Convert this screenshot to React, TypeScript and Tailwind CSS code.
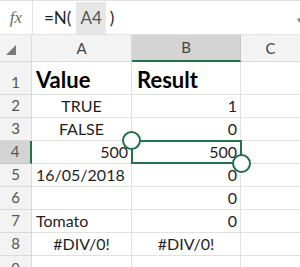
import { ReactNode } from 'react';

type Align = 'left' | 'center' | 'right';

interface Cell {
  text: string;
  align: Align;
}

const rows: { a: Cell; b: Cell }[] = [
  { a: { text: 'TRUE', align: 'center' }, b: { text: '1', align: 'right' } },
  { a: { text: 'FALSE', align: 'center' }, b: { text: '0', align: 'right' } },
  { a: { text: '500', align: 'right' }, b: { text: '500', align: 'right' } },
  { a: { text: '16/05/2018', align: 'left' }, b: { text: '0', align: 'right' } },
  { a: { text: '', align: 'left' }, b: { text: '0', align: 'right' } },
  { a: { text: 'Tomato', align: 'left' }, b: { text: '0', align: 'right' } },
  { a: { text: '#DIV/0!', align: 'center' }, b: { text: '#DIV/0!', align: 'center' } },
];

const alignClass: Record<Align, string> = {
  left: 'justify-start pl-[4px]',
  center: 'justify-center',
  right: 'justify-end pr-[3px]',
};

const DataCell = ({ cell, children }: { cell: Cell; children?: ReactNode }) => (
  <div
    className={`relative flex items-end pb-[1px] h-[23px] border-r border-b border-[#e1e1e1] text-[16px] leading-[20px] text-[#1f1f1f] ${alignClass[cell.align]}`}
  >
    {cell.text}
    {children}
  </div>
);

const Handle = ({ className }: { className: string }) => (
  <div
    className={`absolute w-[19px] h-[19px] rounded-full bg-white border-2 border-[#217346] z-20 ${className}`}
  />
);

export default function App() {
  return (
    <div
      className="w-[300px] h-[267px] overflow-hidden bg-white"
      style={{ fontFamily: 'Lato, "Liberation Sans", sans-serif' }}
    >
      {/* formula bar */}
      <div className="flex h-[35px] border-t border-b border-[#e1e1e1]">
        <div className="w-[33px] flex items-center justify-center border-r border-[#e1e1e1] text-[#6b6b6b] text-[17px] italic" style={{ fontFamily: '"Liberation Serif", serif' }}>
          fx
        </div>
        <div className="flex-1 flex items-center pl-[11px] text-[17px] text-[#1f1f1f] relative">
          <span>=N(</span>
          <span className="ml-[5px] px-[4px] h-[32px] flex items-center bg-[#e6e6e6] text-[#555]">A4</span>
          <span className="ml-[4px]">)</span>
          <span className="absolute right-[-2px] top-[12px] text-[9px] text-[#888]">▾</span>
        </div>
      </div>

      {/* column headers */}
      <div className="grid grid-cols-[32px_100px_109px_1fr] h-[27px] text-[15px] text-[#444]">
        <div className="relative bg-[#f3f3f3] border-r border-b border-[#d9d9d9]">
          <svg className="absolute left-[6px] bottom-[6px]" width="10" height="10" viewBox="0 0 10 10">
            <polygon points="10,0 10,10 0,10" fill="#7a7a7a" />
          </svg>
        </div>
        <div className="flex items-center justify-center bg-[#f3f3f3] border-r border-b border-[#d9d9d9]">A</div>
        <div className="flex items-center justify-center bg-[#d4d4d4] border-r border-[#c6c6c6] border-b-2 border-b-[#217346]">B</div>
        <div className="flex items-center justify-center bg-[#f3f3f3] border-b border-[#d9d9d9]">C</div>
      </div>

      {/* row 1 */}
      <div className="grid grid-cols-[32px_100px_109px_1fr]">
        <div className="flex items-end justify-center pb-[1px] h-[33px] bg-[#f3f3f3] border-r border-b border-[#d9d9d9] text-[15px] text-[#555]">1</div>
        <div className="flex items-end pl-[4px] h-[33px] border-r border-b border-[#e1e1e1] text-[22px] font-bold leading-[28px] text-black">Value</div>
        <div className="flex items-end pl-[5px] h-[33px] border-r border-b border-[#e1e1e1] text-[22px] font-bold leading-[28px] text-black">Result</div>
        <div className="h-[33px] border-b border-[#e1e1e1]" />
      </div>

      {rows.map((row, i) => {
        const n = i + 2;
        const selected = n === 4;
        return (
          <div key={n} className="grid grid-cols-[32px_100px_109px_1fr]">
            <div
              className={`flex items-end justify-center pb-[1px] h-[23px] border-b text-[15px] text-[#555] ${
                selected
                  ? 'bg-[#d4d4d4] border-[#c6c6c6] border-r-2 border-r-[#217346]'
                  : 'bg-[#f3f3f3] border-r border-[#d9d9d9]'
              }`}
            >
              {n}
            </div>
            <DataCell cell={row.a} />
            <DataCell cell={row.b}>
              {selected && (
                <>
                  <div className="absolute left-[-1px] top-[-1px] right-[-2px] bottom-[-1px] border-2 border-[#217346] z-10" />
                  <Handle className="left-[-10px] top-[-10px]" />
                  <Handle className="right-[-11px] bottom-[-10px]" />
                </>
              )}
            </DataCell>
            <div className="h-[23px] border-b border-[#e1e1e1]" />
          </div>
        );
      })}

      <div className="grid grid-cols-[32px_100px_109px_1fr]">
        <div className="flex items-end justify-center h-[23px] bg-[#f3f3f3] border-r border-[#d9d9d9] text-[15px] text-[#555]">9</div>
        <div className="h-[23px] border-r border-[#e1e1e1]" />
        <div className="h-[23px] border-r border-[#e1e1e1]" />
        <div />
      </div>
    </div>
  );
}
